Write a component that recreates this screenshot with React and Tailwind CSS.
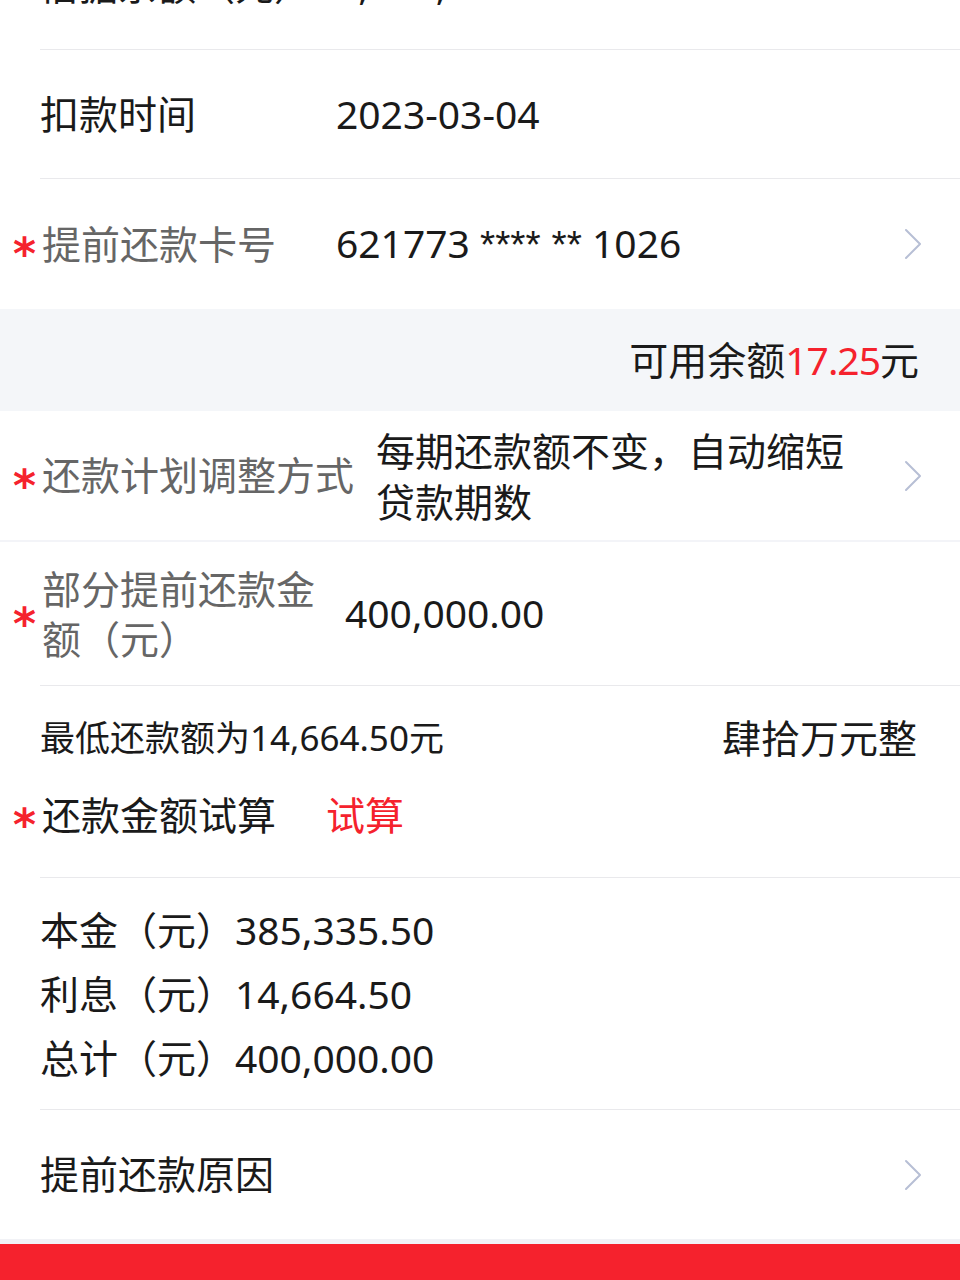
import React from "react";

const FONT = "font-['Noto_Sans','Noto_Sans_CJK_SC',sans-serif]";

function Chevron() {
  return (
    <svg width="18" height="32" viewBox="0 0 18 32" className="shrink-0">
      <polyline points="2,2 16,16 2,30" fill="none" stroke="#b7bfd5" strokeWidth="2" strokeLinecap="round" strokeLinejoin="round" />
    </svg>
  );
}

function Star() {
  return (
    <span className="w-[28px] shrink-0 text-[#f5222d] text-[44px] leading-none font-bold font-['DejaVu_Sans',sans-serif] translate-y-[10px] -translate-x-[1px]">
      *
    </span>
  );
}

export default function App() {
  return (
    <div className={`${FONT} bg-white w-[960px] text-[39px] text-[#1a1a1a] overflow-hidden`}>
      {/* cut top row */}
      <div className="-mt-[79px] ml-10 h-[129px] border-b border-[#e9e9ec] flex items-center">
        <span className="w-[296px] shrink-0">借据余额（元）</span>
        <span>4,004,176.61</span>
      </div>

      {/* 扣款时间 */}
      <div className="ml-10 h-[129px] border-b border-[#e9e9ec] flex items-center">
        <span className="w-[296px] shrink-0">扣款时间</span>
        <span>2023-03-04</span>
      </div>

      {/* 提前还款卡号 */}
      <div className="h-[130px] flex items-center pl-[14px] pr-[38px]">
        <Star />
        <span className="w-[294px] shrink-0 text-[#666]">提前还款卡号</span>
        <span>
          621773 <span className="font-['Liberation_Sans',sans-serif]">**** **</span> 1026
        </span>
        <span className="ml-auto"><Chevron /></span>
      </div>

      {/* 可用余额 */}
      <div className="h-[102px] bg-[#f4f6f9] flex items-center justify-end pr-[41px]">
        <span>可用余额</span>
        <span className="text-[#f5222d] tracking-[-1px]">17.25</span>
        <span>元</span>
      </div>

      {/* 还款计划调整方式 */}
      <div className="h-[131px] border-b-2 border-[#f3f4f8] flex items-center pl-[14px] pr-[38px]">
        <Star />
        <span className="w-[334px] shrink-0 text-[#666]">还款计划调整方式</span>
        <span className="w-[470px] leading-[51px]">每期还款额不变，自动缩短贷款期数</span>
        <span className="ml-auto"><Chevron /></span>
      </div>

      {/* 部分提前还款金额 */}
      <div className="ml-10 border-b border-[#e9e9ec]">
        <div className="-ml-[26px] h-[143px] flex items-center">
          <Star />
          <span className="w-[303px] shrink-0 text-[#666] leading-[50px]">部分提前还款金额（元）</span>
          <span>400,000.00</span>
        </div>
      </div>

      {/* 最低还款额 + 试算 */}
      <div className="ml-10 border-b border-[#e9e9ec] pt-[27px] pb-[37px]">
        <div className="flex items-center justify-between pr-[43px] h-[50px]">
          <span className="text-[35px]">最低还款额为14,664.50元</span>
          <span>肆拾万元整</span>
        </div>
        <div className="-ml-[26px] flex items-center h-[50px] mt-[27px]">
          <Star />
          <span className="w-[284px] shrink-0">还款金额试算</span>
          <span className="text-[#f5222d]">试算</span>
        </div>
      </div>

      {/* 本金 利息 总计 */}
      <div className="ml-10 border-b border-[#e9e9ec] pt-[20px] pb-[19px] leading-[64px]">
        <div>本金（元）385,335.50</div>
        <div>利息（元）14,664.50</div>
        <div>总计（元）400,000.00</div>
      </div>

      {/* 提前还款原因 */}
      <div className="h-[129px] flex items-center pl-10 pr-[38px]">
        <span>提前还款原因</span>
        <span className="ml-auto"><Chevron /></span>
      </div>

      <div className="h-[5px] bg-[#f1f2f6]" />

      <div className="h-[110px] bg-[#f5222d] flex items-center justify-center text-white">
        下一步
      </div>
    </div>
  );
}
